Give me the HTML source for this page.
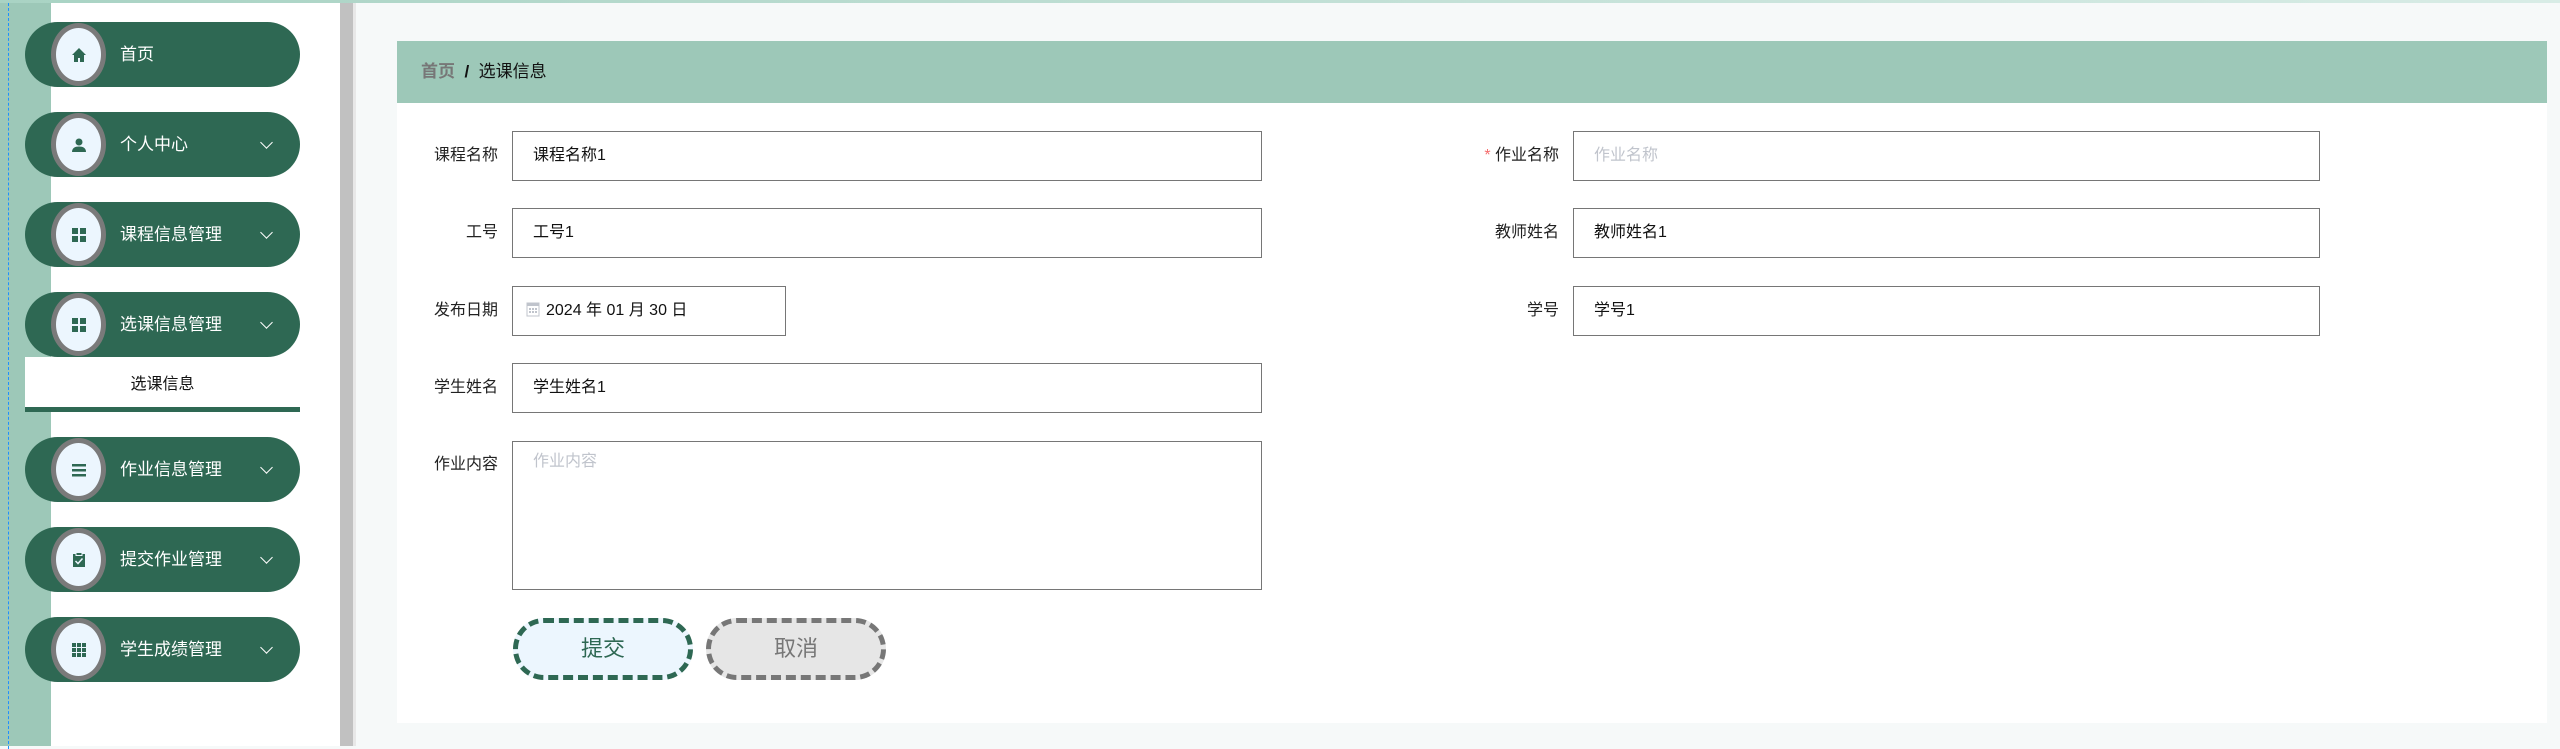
<!DOCTYPE html>
<html><head><meta charset="utf-8"><style>
*{box-sizing:border-box;margin:0;padding:0}
body{width:2560px;height:746px;overflow:hidden;position:relative;background:#f6f9f9;font-family:"Liberation Sans","Noto Sans CJK SC",sans-serif;font-size:16px;color:#333}
.top{position:absolute;left:0;top:0;width:2560px;height:3px;background:linear-gradient(90deg,#a9d3c4,#d8ece6)}
.strip{position:absolute;left:0;top:3px;width:51px;height:743px;background:#9dc8b8}
.dash{position:absolute;left:8px;top:0;height:746px;border-left:1px dashed #1e90ff}
.side{position:absolute;left:51px;top:3px;width:289px;height:743px;background:#fff}
.scroll{position:absolute;left:340px;top:3px;width:13px;height:743px;background:#c1c1c1}
.scroll2{position:absolute;left:353px;top:3px;width:3px;height:743px;background:#e8e8e8}
.pill{position:absolute;left:25px;width:275px;height:65px;background:#2e6853;border-radius:33px;color:#fff;font-size:17px}
.pill .ic{position:absolute;left:26px;top:1px;width:55px;height:63px;border-radius:50%;background:#ecf6fe;border:5px solid #7a7a7a;display:flex;align-items:center;justify-content:center}
.pill .t{position:absolute;left:95px;top:0;line-height:65px}
.pill .ch{position:absolute;left:237px;top:26px;width:9px;height:9px;border-right:1.5px solid #fff;border-bottom:1.5px solid #fff;transform:rotate(45deg)}
.sub{position:absolute;left:25px;top:357px;width:275px;height:50px;background:#fff;text-align:center;line-height:56px;font-size:16px;color:#111}
.bar{position:absolute;left:25px;top:407px;width:275px;height:5px;background:#2e6853}
.bc{position:absolute;left:397px;top:41px;width:2150px;height:62px;background:#9dc8b8;line-height:62px;padding-left:24px;font-size:17px}
.bc b{color:#777}
.card{position:absolute;left:397px;top:103px;width:2150px;height:620px;background:#fff}
.lab{position:absolute;width:120px;text-align:right;font-size:16px;color:#222;line-height:50px}
.inp{position:absolute;height:50px;border:1.5px solid #767676;background:#fff;line-height:47px;padding-left:20px;font-size:16px;color:#111}
.ph{color:#c0c4cc}
.btn{position:absolute;top:618px;height:62px;width:180px;border-radius:31px;border:5px dashed;text-align:center;line-height:52px;font-size:22px}
</style></head><body>
<div class="top"></div>
<div class="strip"><div class="dash"></div></div>
<div class="side"></div>
<div class="scroll"></div><div class="scroll2"></div>

<div class="pill" style="top:22px"><div class="ic"><svg width="16" height="16" viewBox="0 0 16 16"><path d="M8 1L1 8h2v7h4v-4h2v4h4V8h2z" fill="#2e6853"/></svg></div><div class="t">首页</div></div>
<div class="pill" style="top:112px"><div class="ic"><svg width="16" height="16" viewBox="0 0 16 16"><circle cx="8" cy="5" r="3.5" fill="#2e6853"/><path d="M1 15c0-4 3-5.5 7-5.5s7 1.5 7 5.5z" fill="#2e6853"/></svg></div><div class="t">个人中心</div><div class="ch"></div></div>
<div class="pill" style="top:202px"><div class="ic"><svg width="16" height="16" viewBox="0 0 16 16" fill="#2e6853"><rect x="1" y="1" width="6" height="6"/><rect x="9" y="1" width="6" height="6"/><rect x="1" y="9" width="6" height="6"/><rect x="9" y="9" width="6" height="6"/></svg></div><div class="t">课程信息管理</div><div class="ch"></div></div>
<div class="pill" style="top:292px"><div class="ic"><svg width="16" height="16" viewBox="0 0 16 16" fill="#2e6853"><rect x="1" y="1" width="6" height="6"/><rect x="9" y="1" width="6" height="6"/><rect x="1" y="9" width="6" height="6"/><rect x="9" y="9" width="6" height="6"/></svg></div><div class="t">选课信息管理</div><div class="ch"></div></div>
<div class="sub">选课信息</div><div class="bar"></div>
<div class="pill" style="top:437px"><div class="ic"><svg width="16" height="16" viewBox="0 0 16 16" fill="#2e6853"><rect x="1" y="2" width="14" height="2.5"/><rect x="1" y="7" width="14" height="2.5"/><rect x="1" y="12" width="14" height="2.5"/></svg></div><div class="t">作业信息管理</div><div class="ch"></div></div>
<div class="pill" style="top:527px"><div class="ic"><svg width="16" height="16" viewBox="0 0 16 16"><rect x="2" y="2" width="12" height="13" fill="#2e6853"/><rect x="5" y="0.5" width="6" height="3" fill="#2e6853" stroke="#ecf6fe" stroke-width="1"/><path d="M4.5 9l2.5 2.5 4.5-5" stroke="#ecf6fe" stroke-width="1.5" fill="none"/></svg></div><div class="t">提交作业管理</div><div class="ch"></div></div>
<div class="pill" style="top:617px"><div class="ic"><svg width="16" height="16" viewBox="0 0 16 16" fill="#2e6853"><rect x="1" y="1" width="4" height="4"/><rect x="6" y="1" width="4" height="4"/><rect x="11" y="1" width="4" height="4"/><rect x="1" y="6" width="4" height="4"/><rect x="6" y="6" width="4" height="4"/><rect x="11" y="6" width="4" height="4"/><rect x="1" y="11" width="4" height="4"/><rect x="6" y="11" width="4" height="4"/><rect x="11" y="11" width="4" height="4"/></svg></div><div class="t">学生成绩管理</div><div class="ch"></div></div>

<div class="bc"><b>首页</b>&nbsp;&nbsp;<span style="color:#111;font-weight:bold">/</span>&nbsp;&nbsp;<span style="color:#111">选课信息</span></div>
<div class="card"></div>

<div class="lab" style="left:378px;top:131px">课程名称</div>
<div class="inp" style="left:512px;top:131px;width:750px">课程名称1</div>
<div class="lab" style="left:378px;top:208px">工号</div>
<div class="inp" style="left:512px;top:208px;width:750px">工号1</div>
<div class="lab" style="left:378px;top:286px">发布日期</div>
<div class="inp" style="left:512px;top:286px;width:274px;padding-left:13px"><svg width="14" height="16" viewBox="0 0 14 16" style="vertical-align:-2px;margin-right:6px"><rect x="1" y="2" width="12" height="13" fill="none" stroke="#c0c4cc"/><rect x="1" y="2" width="12" height="3" fill="#c0c4cc"/><g fill="#c0c4cc"><rect x="3" y="7" width="2" height="2"/><rect x="6" y="7" width="2" height="2"/><rect x="9" y="7" width="2" height="2"/><rect x="3" y="10" width="2" height="2"/><rect x="6" y="10" width="2" height="2"/><rect x="9" y="10" width="2" height="2"/></g></svg>2024 年 01 月 30 日</div>
<div class="lab" style="left:378px;top:363px">学生姓名</div>
<div class="inp" style="left:512px;top:363px;width:750px">学生姓名1</div>
<div class="lab" style="left:378px;top:441px;line-height:48px">作业内容</div>
<div class="inp ph" style="left:512px;top:441px;width:750px;height:149px;line-height:40px">作业内容</div>

<div class="lab" style="left:1439px;top:131px"><span style="color:#f56c6c">*</span> 作业名称</div>
<div class="inp ph" style="left:1573px;top:131px;width:747px">作业名称</div>
<div class="lab" style="left:1439px;top:208px">教师姓名</div>
<div class="inp" style="left:1573px;top:208px;width:747px">教师姓名1</div>
<div class="lab" style="left:1439px;top:286px">学号</div>
<div class="inp" style="left:1573px;top:286px;width:747px">学号1</div>

<div class="btn" style="left:513px;border-color:#2e6853;background:#ecf6fe;color:#2e6853">提交</div>
<div class="btn" style="left:706px;border-color:#777;background:#e6e6e6;color:#777">取消</div>
</body></html>
